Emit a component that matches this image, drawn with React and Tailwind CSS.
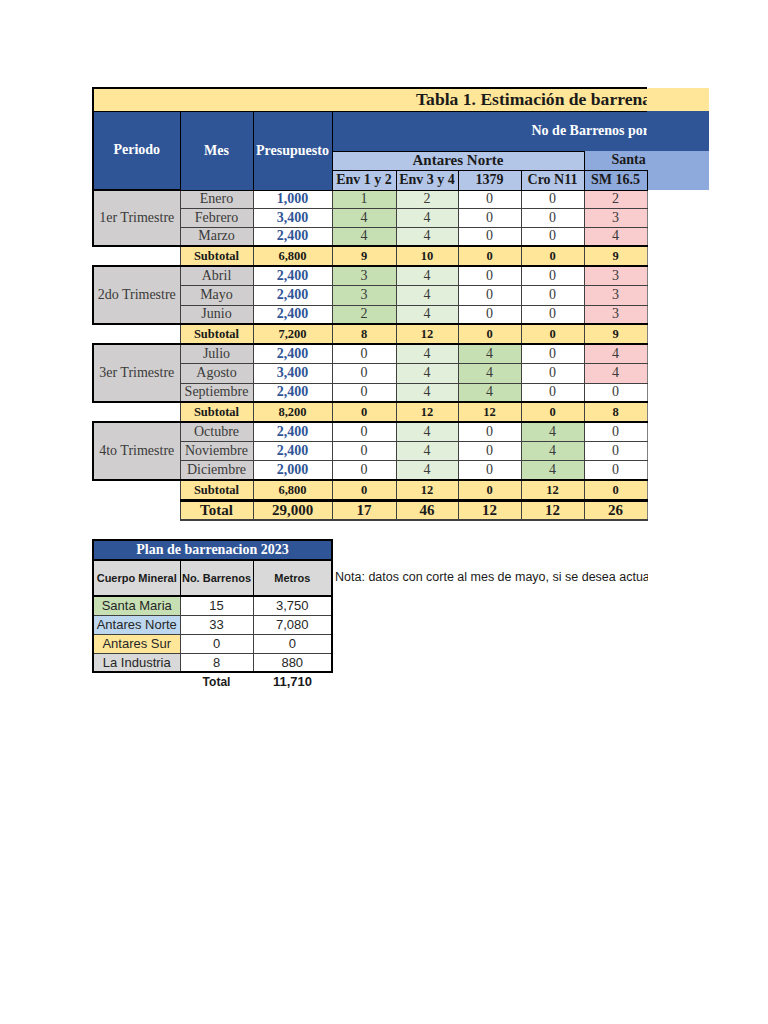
import React from 'react';

const G = 'bg-[#C6E0B4]';
const L = 'bg-[#E2EFDA]';
const P = 'bg-[#F9CDCD]';
const W = 'bg-white';

const quarters = [
    {
        name: '1er Trimestre',
        rows: [
            { mes: 'Enero', pres: '1,000', vals: [1, 2, 0, 0, 2], bg: [G, L, W, W, P], h: 'h-[18px]' },
            { mes: 'Febrero', pres: '3,400', vals: [4, 4, 0, 0, 3], bg: [G, L, W, W, P], h: 'h-[19px]' },
            { mes: 'Marzo', pres: '2,400', vals: [4, 4, 0, 0, 4], bg: [G, L, W, W, P], h: 'h-[19px]' },
        ],
        sub: { pres: '6,800', vals: [9, 10, 0, 0, 9] },
    },
    {
        name: '2do Trimestre',
        rows: [
            { mes: 'Abril', pres: '2,400', vals: [3, 4, 0, 0, 3], bg: [G, L, W, W, P], h: 'h-[19px]' },
            { mes: 'Mayo', pres: '2,400', vals: [3, 4, 0, 0, 3], bg: [G, L, W, W, P], h: 'h-[20px]' },
            { mes: 'Junio', pres: '2,400', vals: [2, 4, 0, 0, 3], bg: [G, L, W, W, P], h: 'h-[19px]' },
        ],
        sub: { pres: '7,200', vals: [8, 12, 0, 0, 9] },
    },
    {
        name: '3er Trimestre',
        rows: [
            { mes: 'Julio', pres: '2,400', vals: [0, 4, 4, 0, 4], bg: [W, L, G, W, P], h: 'h-[19px]' },
            { mes: 'Agosto', pres: '3,400', vals: [0, 4, 4, 0, 4], bg: [W, L, G, W, P], h: 'h-[20px]' },
            { mes: 'Septiembre', pres: '2,400', vals: [0, 4, 4, 0, 0], bg: [W, L, G, W, W], h: 'h-[19px]' },
        ],
        sub: { pres: '8,200', vals: [0, 12, 12, 0, 8] },
    },
    {
        name: '4to Trimestre',
        rows: [
            { mes: 'Octubre', pres: '2,400', vals: [0, 4, 0, 4, 0], bg: [W, L, W, G, W], h: 'h-[19px]' },
            { mes: 'Noviembre', pres: '2,400', vals: [0, 4, 0, 4, 0], bg: [W, L, W, G, W], h: 'h-[19px]' },
            { mes: 'Diciembre', pres: '2,000', vals: [0, 4, 0, 4, 0], bg: [W, L, W, G, W], h: 'h-[20px]' },
        ],
        sub: { pres: '6,800', vals: [0, 12, 0, 12, 0] },
    },
];

const plan = [
    { name: 'Santa Maria', bg: 'bg-[#C6E0B4]', n: '15', m: '3,750' },
    { name: 'Antares Norte', bg: 'bg-[#BDD7EE]', n: '33', m: '7,080' },
    { name: 'Antares Sur', bg: 'bg-[#FFE699]', n: '0', m: '0' },
    { name: 'La Industria', bg: 'bg-[#D9D9D9]', n: '8', m: '880' },
];

const blue = 'bg-[#2F5597] text-white font-bold text-[14px] border border-black text-center';
const envCell = 'bg-[#B4C6E7] font-bold text-[14px] text-[#1a1a1a] border border-black text-center whitespace-nowrap';

const QuarterRows = ({ q }) => (
    <>
        {q.rows.map((r, i) => {
            const last = i === q.rows.length - 1;
            const bb = last ? 'border-b-2 border-b-black' : '';
            return (
                <tr key={r.mes} className={r.h}>
                    {i === 0 && (
                        <td rowSpan={3} className="bg-[#D0CECE] text-[#3a3a3a] text-[14px] text-center whitespace-nowrap border-2 border-black border-r border-r-[#404040]">
                            {q.name}
                        </td>
                    )}
                    <td className={`bg-[#D0CECE] text-[#3a3a3a] text-[14px] text-center border border-[#404040] ${bb}`}>{r.mes}</td>
                    <td className={`bg-white text-[#2F5597] font-bold text-[14px] text-center border border-[#404040] ${bb}`}>{r.pres}</td>
                    {r.vals.map((v, j) => (
                        <td key={j} className={`${r.bg[j]} text-[#3a3a3a] text-[14px] text-center border border-[#404040] ${j === 4 ? 'border-r-[#7f7f7f]' : ''} ${bb}`}>{v}</td>
                    ))}
                    <td className="border-0"></td>
                </tr>
            );
        })}
        <tr className="h-[20px]">
            <td className="border-0"></td>
            <td className="bg-[#FFE699] font-bold text-[12.5px] text-[#1a1a1a] text-center border border-[#404040] border-y-2 border-y-black">Subtotal</td>
            <td className="bg-[#FFE699] font-bold text-[12.5px] text-[#1a1a1a] text-center border border-[#404040] border-y-2 border-y-black">{q.sub.pres}</td>
            {q.sub.vals.map((v, j) => (
                <td key={j} className={`bg-[#FFE699] font-bold text-[12.5px] text-[#1a1a1a] text-center border border-[#404040] border-y-2 border-y-black ${j === 4 ? 'border-r-[#7f7f7f]' : ''}`}>{v}</td>
            ))}
            <td className="border-0"></td>
        </tr>
    </>
);

const MainTable = () => (
    <table className="border-collapse table-fixed w-[616px] font-['Liberation_Serif',serif] leading-none">
        <colgroup>
            <col className="w-[87px]" />
            <col className="w-[73px]" />
            <col className="w-[79px]" />
            <col className="w-[64px]" />
            <col className="w-[62px]" />
            <col className="w-[63px]" />
            <col className="w-[63px]" />
            <col className="w-[63px]" />
            <col className="w-[62px]" />
        </colgroup>
        <tbody>
            <tr className="h-[23px]">
                <td colSpan={8} className="bg-[#FFE699] border-2 border-black border-b border-r-0 p-0">
                    <div className="overflow-hidden whitespace-nowrap pl-[322px] text-[17.6px] font-bold text-[#1a1a1a]">Tabla 1. Estimación de barrenación por mes</div>
                </td>
                <td className="bg-[#FFE699] border-0"></td>
            </tr>
            <tr className="h-[40px]">
                <td rowSpan={3} className={`${blue} border-l-2`}>Periodo</td>
                <td rowSpan={3} className={blue}>Mes</td>
                <td rowSpan={3} className={blue}>Presupuesto</td>
                <td colSpan={5} className="bg-[#2F5597] text-white font-bold text-[14px] border-l border-black p-0">
                    <div className="overflow-hidden whitespace-nowrap pl-[199px]">No de Barrenos por Cuerpo Mineral</div>
                </td>
                <td className="bg-[#2F5597] border-0"></td>
            </tr>
            <tr className="h-[19px]">
                <td colSpan={4} className="bg-[#B4C6E7] font-bold text-[15px] text-[#1a1a1a] text-center border border-black">Antares Norte</td>
                <td className="bg-[#8EA9DB] font-bold text-[14px] text-[#1a1a1a] p-0 border-0">
                    <div className="overflow-hidden whitespace-nowrap pl-[27px]">Santa Maria</div>
                </td>
                <td className="bg-[#8EA9DB] border-0"></td>
            </tr>
            <tr className="h-[20px]">
                <td className={envCell}>Env 1 y 2</td>
                <td className={envCell}>Env 3 y 4</td>
                <td className={envCell}>1379</td>
                <td className={envCell}>Cro N11</td>
                <td className="bg-[#8EA9DB] font-bold text-[14px] text-[#1a1a1a] border border-black text-center whitespace-nowrap">SM 16.5</td>
                <td className="bg-[#8EA9DB] border-0"></td>
            </tr>
            {quarters.map(q => <QuarterRows key={q.name} q={q} />)}
            <tr className="h-[20px]">
                <td className="border-0"></td>
                <td className="bg-[#FFE699] font-bold text-[15px] text-[#1a1a1a] text-center border border-[#404040] border-t-[3px] border-t-black border-b-2">Total</td>
                <td className="bg-[#FFE699] font-bold text-[15px] text-[#1a1a1a] text-center border border-[#404040] border-t-[3px] border-t-black border-b-2">29,000</td>
                {[17, 46, 12, 12, 26].map((v, j) => (
                    <td key={j} className={`bg-[#FFE699] font-bold text-[15px] text-[#1a1a1a] text-center border border-[#404040] border-t-[3px] border-t-black border-b-2 ${j === 4 ? 'border-r-[#7f7f7f]' : ''}`}>{v}</td>
                ))}
                <td className="border-0"></td>
            </tr>
        </tbody>
    </table>
);

const PlanTable = () => (
    <table className="border-collapse table-fixed w-[239px] font-['Liberation_Sans',sans-serif] leading-none">
        <colgroup>
            <col className="w-[87px]" />
            <col className="w-[73px]" />
            <col className="w-[79px]" />
        </colgroup>
        <tbody>
            <tr className="h-[20px]">
                <td colSpan={3} className="bg-[#2F5597] text-white font-bold text-[14px] text-center border-2 border-black font-['Liberation_Serif',serif]">Plan de barrenacion 2023</td>
            </tr>
            <tr className="h-[36px]">
                <td className="bg-[#D9D9D9] font-bold text-[11px] text-[#1a1a1a] text-center whitespace-nowrap border border-black border-l-2">Cuerpo Mineral</td>
                <td className="bg-[#D9D9D9] font-bold text-[11px] text-[#1a1a1a] text-center whitespace-nowrap border border-black">No. Barrenos</td>
                <td className="bg-[#D9D9D9] font-bold text-[11px] text-[#1a1a1a] text-center whitespace-nowrap border border-black border-r-2">Metros</td>
            </tr>
            {plan.map((p, i) => (
                <tr key={p.name} className="h-[19px]">
                    <td className={`${p.bg} text-[13px] text-[#262626] text-center whitespace-nowrap border border-[#404040] border-l-2 border-l-black ${i === 0 ? 'border-t-2 border-t-black' : ''} ${i === 3 ? 'border-b-2 border-b-black' : ''}`}>{p.name}</td>
                    <td className={`bg-white text-[13px] text-[#262626] text-center border border-[#404040] ${i === 0 ? 'border-t-2 border-t-black' : ''} ${i === 3 ? 'border-b-2 border-b-black' : ''}`}>{p.n}</td>
                    <td className={`bg-white text-[13px] text-[#262626] text-center border border-[#404040] border-r-2 border-r-black ${i === 0 ? 'border-t-2 border-t-black' : ''} ${i === 3 ? 'border-b-2 border-b-black' : ''}`}>{p.m}</td>
                </tr>
            ))}
            <tr className="h-[18px]">
                <td></td>
                <td className="font-bold text-[12px] text-[#1a1a1a] text-center">Total</td>
                <td className="font-bold text-[13px] text-[#1a1a1a] text-center">11,710</td>
            </tr>
        </tbody>
    </table>
);

const App = () => (
    <div className="bg-white min-h-[1024px] w-[768px] pt-[87px] pl-[92px]">
        <MainTable />
        <div className="flex items-start mt-[18px]">
            <PlanTable />
            <div className="w-[313px] ml-[2px] mt-[29px] overflow-hidden whitespace-nowrap font-['Liberation_Sans',sans-serif] text-[12.5px] text-[#1a1a1a]">
                Nota: datos con corte al mes de mayo, si se desea actualizar los datos
            </div>
        </div>
    </div>
);

export default App;
